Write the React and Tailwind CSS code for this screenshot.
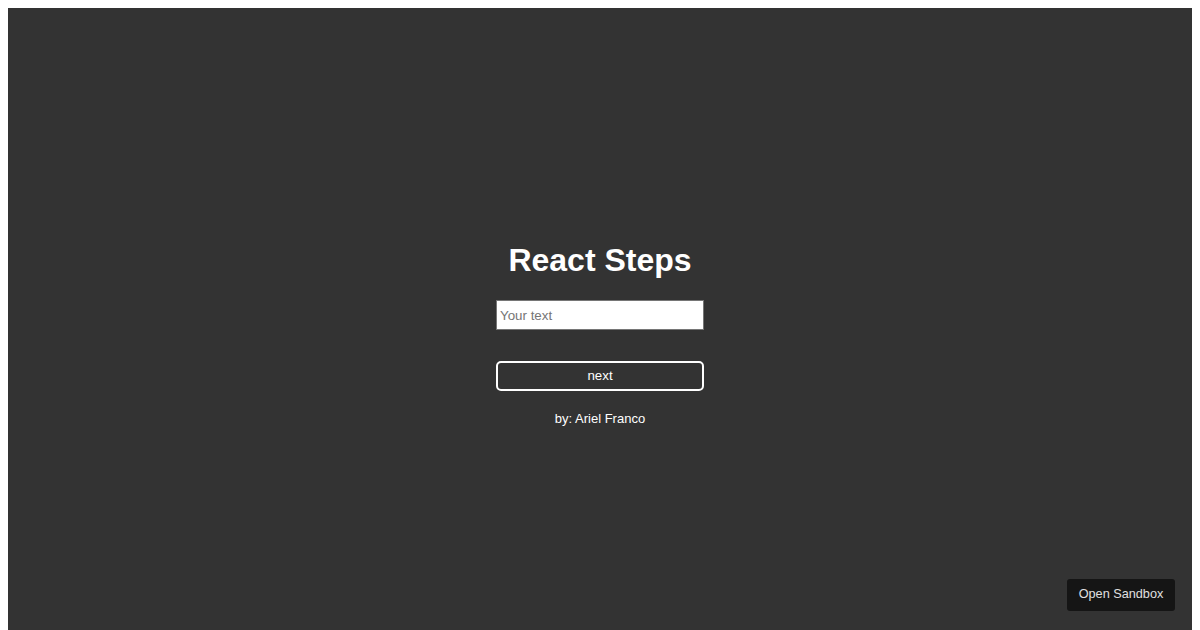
export default function App() {
  return (
    <div className="bg-white p-2 h-screen overflow-hidden font-['Liberation_Sans',Arial,sans-serif]">
      <div className="bg-[#333333] h-[630px] flex flex-col items-center pt-[234px]">
        <h1 className="text-white text-[32px] leading-[36px] font-bold">React Steps</h1>

        <input
          type="text"
          placeholder="Your text"
          className="mt-[22px] w-[208px] h-[30px] bg-white border border-[#767676] px-[3px] text-[13.33px] text-black placeholder:text-[#757575] outline-none"
        />

        <button className="mt-[31px] w-[208px] h-[30px] border-2 border-white rounded-[5px] text-white text-[13.33px] leading-none">
          next
        </button>

        <p className="mt-[20px] text-[13px] leading-[16px] text-white">by: Ariel Franco</p>
      </div>

      <button className="fixed right-[25px] bottom-[19px] h-[32px] w-[108px] bg-[#151515] rounded-[3px] text-[#e0e0e0] text-[12.7px]">
        Open Sandbox
      </button>
    </div>
  );
}
